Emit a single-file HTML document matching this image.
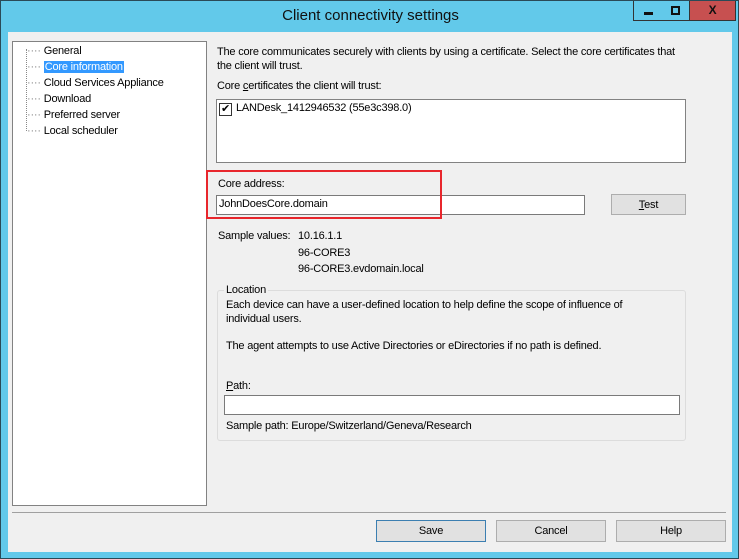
<!DOCTYPE html><html><head><style>
*{margin:0;padding:0;box-sizing:border-box}
body{width:739px;height:559px;overflow:hidden;background:#62c9ea;font-family:"Liberation Sans",sans-serif;font-size:11px;letter-spacing:-0.2px;color:#000;position:relative;border:1px solid #2a4a57}
.a{position:absolute}
.t{position:absolute;white-space:nowrap}
.btn{position:absolute;background:#e1e1e1;border:1px solid #adadad;text-align:center;line-height:21px}
.box{position:absolute;background:#fff;border:1px solid #9a9a9a}
</style></head><body>
<div class="t" style="left:0;width:739px;top:6px;text-align:center;font-size:15px;letter-spacing:0;color:#111">Client connectivity settings</div>
<div class="a" style="left:632px;top:0;width:30px;height:20px;border:1px solid #333;border-top:none;background:#62c9ea"><div class="a" style="left:10px;top:11px;width:9px;height:3px;background:#111"></div></div>
<div class="a" style="left:661px;top:0;width:28px;height:20px;border:1px solid #333;border-top:none;border-left:none;background:#62c9ea"><div class="a" style="left:9px;top:5px;width:9px;height:9px;border:2px solid #111"></div></div>
<div class="a" style="left:689px;top:0;width:46px;height:20px;border:1px solid #333;border-top:none;border-left:none;background:#c75050;color:#111;font-weight:bold;text-align:center;line-height:19px;font-size:12px">X</div>
<div class="a" style="left:7px;top:31px;width:724px;height:520px;background:#f0f0f0"></div>
<div class="box" style="left:11px;top:40px;width:195px;height:465px;border-color:#828282"></div>
<div class="a" style="left:25px;top:48px;height:82px;border-left:1px dotted #888"></div>
<div class="t" style="left:26px;top:42px;line-height:16px">
<div><span style="color:#888">····</span> General</div>
<div><span style="color:#888">····</span> <span style="background:#3399ff;color:#fff;padding:0 1px">Core information</span></div>
<div><span style="color:#888">····</span> Cloud Services Appliance</div>
<div><span style="color:#888">····</span> Download</div>
<div><span style="color:#888">····</span> Preferred server</div>
<div><span style="color:#888">····</span> Local scheduler</div></div>
<div class="t" style="left:216px;top:44px;line-height:14px">The core communicates securely with clients by using a certificate. Select the core certificates that<br>the client will trust.</div>
<div class="t" style="left:216px;top:79px">Core <u>c</u>ertificates the client will trust:</div>
<div class="box" style="left:215px;top:98px;width:470px;height:64px;border-color:#828282"></div>
<div class="a" style="left:218px;top:102px;width:13px;height:13px;border:1px solid #333;background:#fff;font-size:11px;line-height:11px;text-align:center">✔</div>
<div class="t" style="left:235px;top:101px">LANDesk_1412946532 (55e3c398.0)</div>
<div class="t" style="left:217px;top:177px">Core address:</div>
<div class="box" style="left:215px;top:194px;width:369px;height:20px;border-color:#7a7a7a"></div>
<div class="t" style="left:218px;top:197px">JohnDoesCore.domain</div>
<div class="a" style="left:205px;top:169px;width:236px;height:49px;border:2px solid #e8262c"></div>
<div class="btn" style="left:610px;top:193px;width:75px;height:21px"><u>T</u>est</div>
<div class="t" style="left:217px;top:227px;line-height:16.5px">Sample values:</div>
<div class="t" style="left:297px;top:227px;line-height:16.5px">10.16.1.1<br>96-CORE3<br>96-CORE3.evdomain.local</div>
<div class="a" style="left:216px;top:289px;width:469px;height:151px;border:1px solid #dcdcdc;border-radius:3px"></div>
<div class="t" style="left:223px;top:283px;background:#f0f0f0;padding:0 2px">Location</div>
<div class="t" style="left:225px;top:297px;line-height:14px">Each device can have a user-defined location to help define the scope of influence of<br>individual users.</div>
<div class="t" style="left:225px;top:339px">The agent attempts to use Active Directories or eDirectories if no path is defined.</div>
<div class="t" style="left:225px;top:379px"><u>P</u>ath:</div>
<div class="box" style="left:223px;top:394px;width:456px;height:20px;border-color:#7a7a7a"></div>
<div class="t" style="left:225px;top:419px">Sample path: Europe/Switzerland/Geneva/Research</div>
<div class="a" style="left:11px;top:511px;width:714px;height:1px;background:#a0a0a0"></div>
<div class="btn" style="left:375px;top:519px;width:110px;height:22px;border-color:#3c7fb1">Save</div>
<div class="btn" style="left:495px;top:519px;width:110px;height:22px">Cancel</div>
<div class="btn" style="left:615px;top:519px;width:110px;height:22px">Help</div>
</body></html>
